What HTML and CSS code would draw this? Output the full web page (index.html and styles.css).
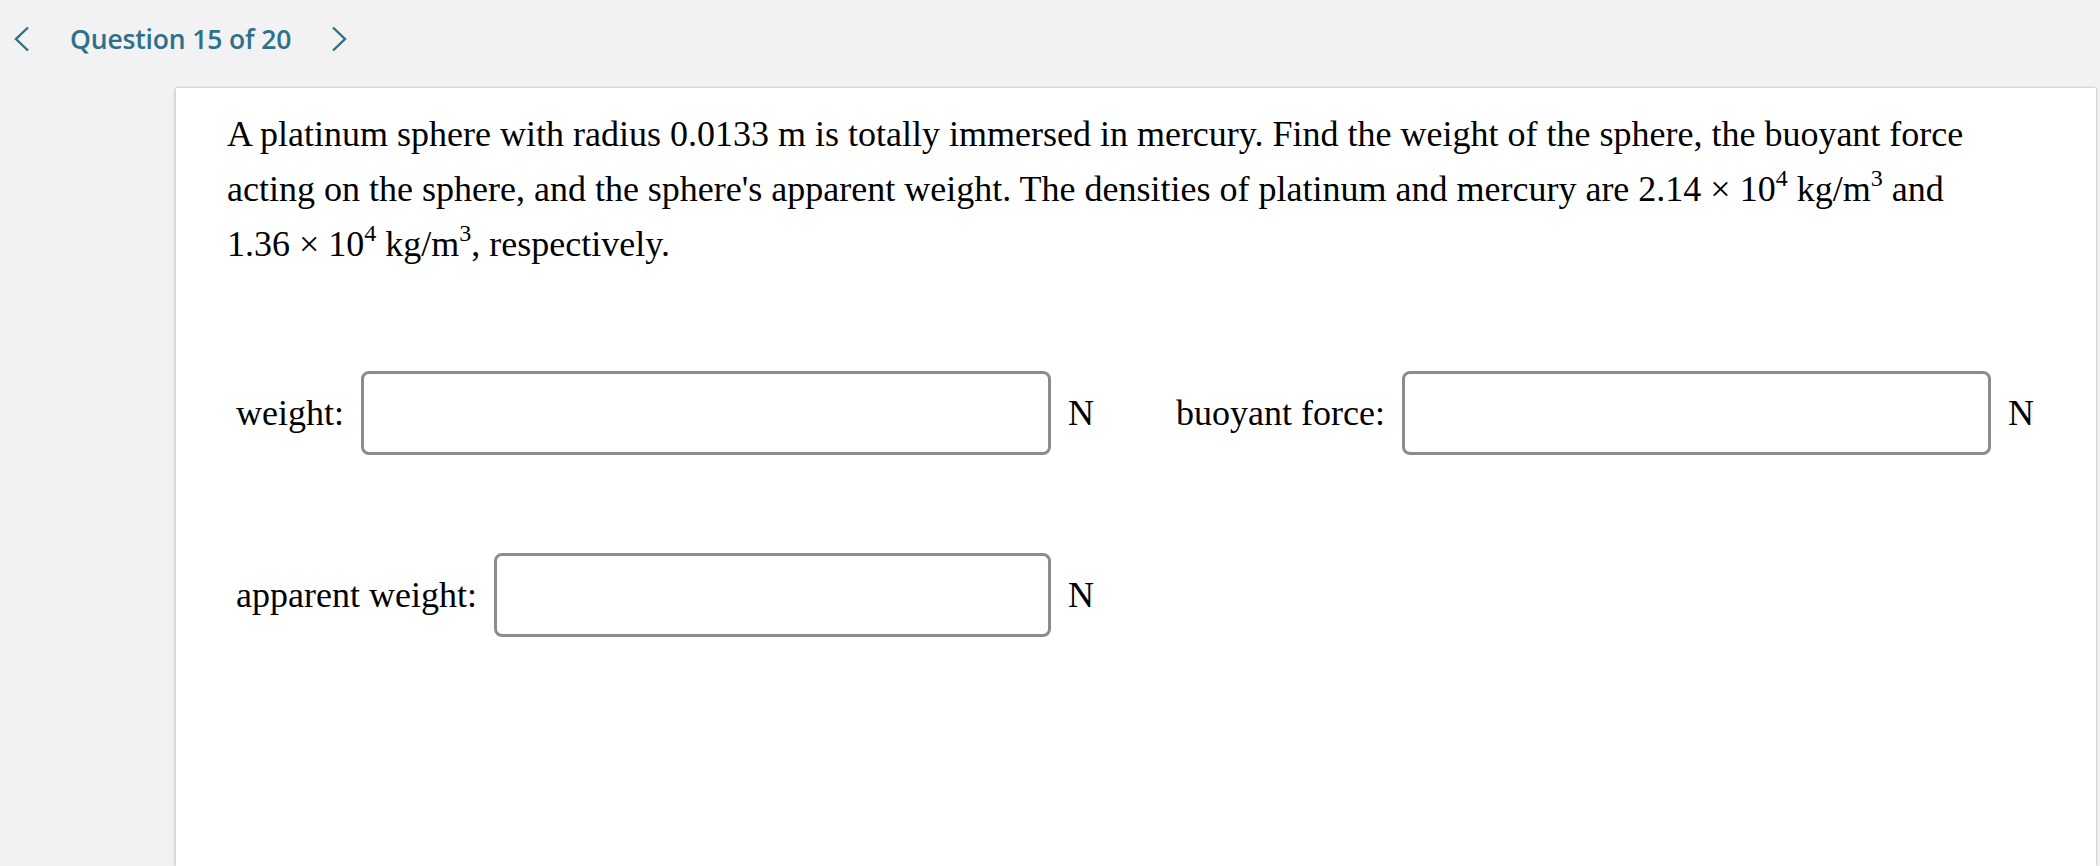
FILE: index.html
```html
<!DOCTYPE html>
<html lang="en">
<head>
<meta charset="utf-8">
<title>Question 15 of 20</title>
<link rel="stylesheet" href="styles.css">
</head>
<body>
<header class="topbar">
  <button class="nav-btn prev" aria-label="Previous question">
    <svg width="16" height="26" viewBox="0 0 16 26"><polyline points="14,1.5 2,13 14,24.5" fill="none" stroke="#2e7089" stroke-width="2.4"/></svg>
  </button>
  <span class="qtitle">Question 15 of 20</span>
  <button class="nav-btn next" aria-label="Next question">
    <svg width="16" height="26" viewBox="0 0 16 26"><polyline points="2,1.5 14,13 2,24.5" fill="none" stroke="#2e7089" stroke-width="2.4"/></svg>
  </button>
</header>
<main class="card">
  <p class="prompt">A platinum sphere with radius 0.0133 m is totally immersed in mercury. Find the weight of the sphere, the buoyant force acting on the sphere, and the sphere's apparent weight. The densities of platinum and mercury are 2.14 × 10<sup>4</sup> kg/m<sup>3</sup> and 1.36 × 10<sup>4</sup> kg/m<sup>3</sup>, respectively.</p>
  <div class="answers">
    <label class="field"><span class="lbl">weight:</span><input class="box" type="text"><span class="unit">N</span></label>
    <label class="field"><span class="lbl">buoyant force:</span><input class="box" type="text"><span class="unit">N</span></label>
    <label class="field"><span class="lbl">apparent weight:</span><input class="box" type="text"><span class="unit">N</span></label>
  </div>
</main>
</body>
</html>
```
FILE: styles.css
```css
html, body {
  margin: 0;
  padding: 0;
  background: #f2f2f2;
  height: 100%;
  overflow: hidden;
}
body {
  font-family: "Liberation Serif", "Times New Roman", serif;
}
.topbar {
  height: 78px;
  display: flex;
  align-items: center;
  padding-left: 14px;
  margin-bottom: 10px;
}
.nav-btn {
  background: none;
  border: 0;
  padding: 0;
  display: flex;
  align-items: center;
  cursor: pointer;
}
.qtitle {
  font-family: "Open Sans", "Noto Sans", sans-serif;
  font-weight: 600;
  font-size: 26.5px;
  letter-spacing: -0.15px;
  color: #2e7089;
  margin-left: 40px;
  margin-right: 40px;
}
.card {
  background: #fff;
  margin-left: 176px;
  margin-right: 4px;
  height: calc(100vh - 88px);
  box-sizing: border-box;
  box-shadow: -1px 0 3px rgba(0, 0, 0, 0.18), 1px 0 2px rgba(0, 0, 0, 0.12);
  padding: 19px 0 0 51px;
}
.prompt {
  margin: 0;
  width: 1765px;
  font-size: 36px;
  line-height: 55px;
  color: #000;
}
.prompt sup {
  font-size: 24px;
  line-height: 0;
  vertical-align: 15px;
}
.answers {
  display: grid;
  grid-template-columns: 858px 858px;
  column-gap: 82px;
  row-gap: 98px;
  margin-top: 99px;
  margin-left: 9px;
}
.field {
  display: flex;
  align-items: center;
  font-size: 36px;
}
.lbl {
  white-space: nowrap;
}
.box {
  flex: 1;
  min-width: 0;
  height: 84px;
  box-sizing: border-box;
  margin: 0 17px 0 17px;
  border: 3px solid #8c8c8c;
  border-radius: 8px;
  background: #fff;
  font-size: 30px;
  padding: 0 12px;
}
.unit {
  width: 26px;
}
```
